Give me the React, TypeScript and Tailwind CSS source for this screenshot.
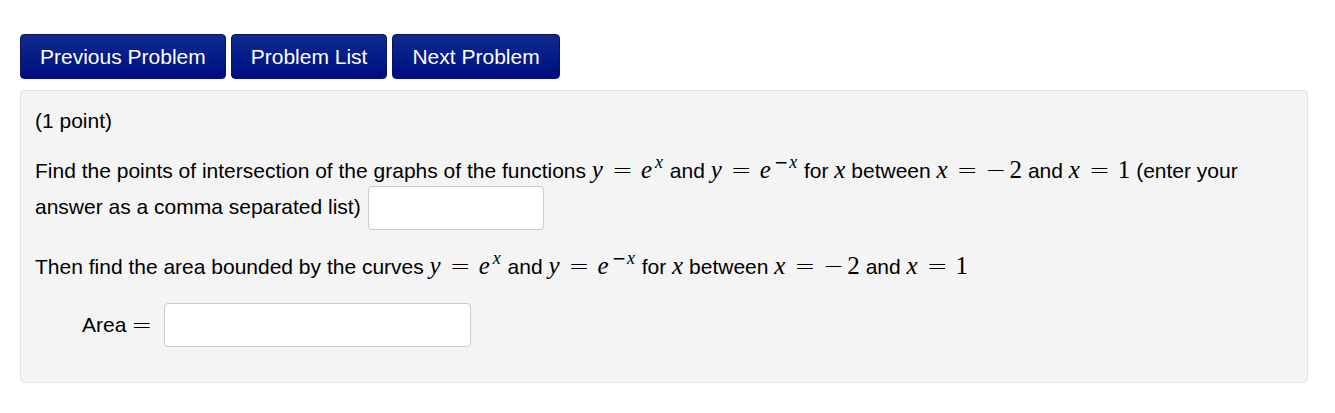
import React from "react";

const M: React.FC<{ children: React.ReactNode }> = ({ children }) => (
  <span className="font-['Liberation_Serif',serif] text-[25px] leading-none whitespace-nowrap">{children}</span>
);
const I: React.FC<{ children: React.ReactNode }> = ({ children }) => <span className="italic">{children}</span>;
const Op: React.FC<{ children: React.ReactNode }> = ({ children }) => (
  <span className="font-['DejaVu_Sans',sans-serif] font-extralight text-[25px] not-italic">{children}</span>
);
const Eq = () => (
  <span className="ml-[9px] mr-[8px]">
    <Op>=</Op>
  </span>
);
const Sup: React.FC<{ children: React.ReactNode }> = ({ children }) => (
  <span className="text-[18px] relative top-[-10px] ml-[3px] mr-[1px] leading-none">{children}</span>
);

const ex = (
  <M>
    <I>y</I>
    <Eq />
    <I>e</I>
    <Sup>
      <I>x</I>
    </Sup>
  </M>
);
const enx = (
  <M>
    <I>y</I>
    <Eq />
    <I>e</I>
    <Sup>
      <span className="font-['DejaVu_Sans',sans-serif] text-[17px] mr-[1px]">−</span>
      <I>x</I>
    </Sup>
  </M>
);
const xEq = (v: string, neg = false) => (
  <M>
    <I>x</I>
    <Eq />
    {neg && (
      <span className="mr-[3px]">
        <Op>−</Op>
      </span>
    )}
    {v}
  </M>
);
const x = (
  <M>
    <I>x</I>
  </M>
);

export default function App() {
  const btn =
    "h-[45px] px-[19px] rounded-[4px] text-white text-[21px] bg-gradient-to-b from-[#102a8e] to-[#010a80] border border-[#0a1560]";
  return (
    <div className="bg-white w-[1335px] h-[413px] font-['Liberation_Sans',Arial,sans-serif] text-[#000] pt-[34px]">
      <div className="flex gap-[5px] ml-[20px]">
        <button className={btn}>Previous Problem</button>
        <button className={btn}>Problem List</button>
        <button className={btn}>Next Problem</button>
      </div>
      <div className="ml-[20px] mt-[11px] w-[1288px] h-[293px] bg-[#f4f4f4] border border-[#e3e3e3] rounded-[4px] pl-[14px] pr-[14px] pt-[15px] text-[21px] leading-[30px]">
        <p>(1 point)</p>
        <p className="mt-[20px]">
          Find the points of intersection of the graphs of the functions {ex} and {enx} for {x} between{" "}
          {xEq("2", true)} and {xEq("1")} (enter your answer as a comma separated list){" "}
          <input className="align-middle ml-[2px] w-[176px] h-[44px] bg-white border border-[#ccc] rounded-[4px]" />
        </p>
        <p className="mt-[22px]">
          Then find the area bounded by the curves {ex} and {enx} for {x} between {xEq("2", true)} and{" "}
          {xEq("1")}
        </p>
        <div className="mt-[21px] pl-[47px] flex items-center">
          <span className="flex items-center">
            Area
            <span className="ml-[5px]">
              <Op>=</Op>
            </span>
          </span>
          <input className="ml-[12px] w-[307px] h-[44px] bg-white border border-[#ccc] rounded-[4px]" />
        </div>
      </div>
    </div>
  );
}
